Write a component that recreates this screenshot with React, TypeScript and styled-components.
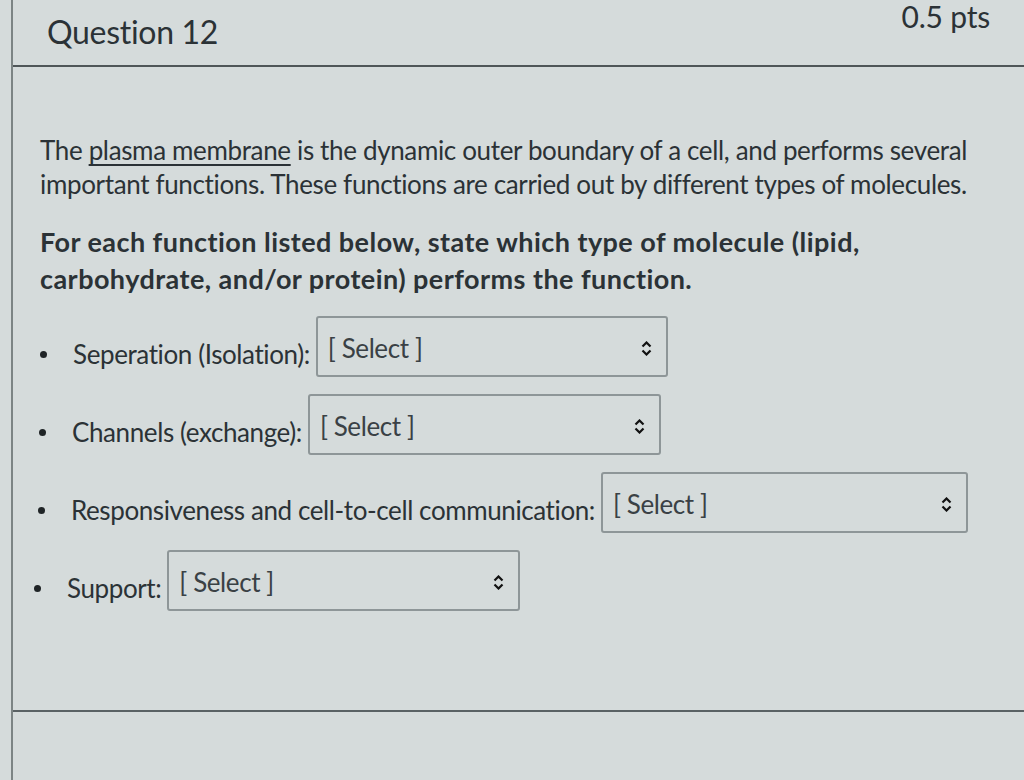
import React from "react";
import styled, { createGlobalStyle } from "styled-components";

const Global = createGlobalStyle`
  html, body { margin: 0; padding: 0; }
  body {
    background: #d5dbdb;
    font-family: Lato, "Noto Sans", sans-serif;
    color: #2b3236;
    width: 1024px;
    height: 780px;
    overflow: hidden;
  }
`;

const Frame = styled.div`
  margin-left: 11px;
  border-left: 2px solid #7c8484;
  height: 780px;
  display: flex;
  flex-direction: column;
`;

const Header = styled.header`
  height: 67px;
  border-bottom: 2px solid #4f5658;
  display: flex;
  justify-content: space-between;
  align-items: flex-start;
  padding: 0 34px;
  box-sizing: border-box;
`;

const Title = styled.h2`
  margin: 13px 0 0 0;
  font-size: 32px;
  line-height: 38px;
  font-weight: 400;
  letter-spacing: -0.3px;
`;

const Points = styled.div`
  margin-top: 0;
  font-size: 30px;
  line-height: 32px;
  font-weight: 400;
  letter-spacing: -0.2px;
`;

const Body = styled.section`
  padding: 66px 0 0 27px;
  height: 645px;
  box-sizing: border-box;
  border-bottom: 2px solid #5a6264;
`;

const Para = styled.p`
  margin: 0;
  font-size: 26px;
  line-height: 34px;
  letter-spacing: -0.35px;
`;

const BoldPara = styled.p`
  margin: 22px 0 0 0;
  font-size: 27px;
  line-height: 37px;
  font-weight: 700;
  letter-spacing: 0.45px;
`;

const Link = styled.span`
  text-decoration: underline;
  text-decoration-thickness: 1.5px;
  text-underline-offset: 4px;
`;

const List = styled.ul`
  margin: 19px 0 0 0;
  padding: 0;
  list-style: none;
  display: flex;
  flex-direction: column;
  gap: 17px;
`;

const Item = styled.li<{ $indent: number }>`
  display: flex;
  align-items: flex-start;
  height: 61px;
  margin-left: ${(p) => p.$indent}px;
  font-size: 26px;
  line-height: 34px;
  letter-spacing: -0.4px;
`;

const Dot = styled.span`
  width: 7px;
  height: 7px;
  border-radius: 50%;
  background: #1f2426;
  margin: 35px 26px 0 0;
  flex: none;
`;

const Label = styled.span`
  margin: 21px 6px 0 0;
  white-space: nowrap;
`;

const SelectBox = styled.div<{ $w: number }>`
  width: ${(p) => p.$w}px;
  height: 61px;
  box-sizing: border-box;
  border: 2px solid #8e9698;
  border-radius: 3px;
  display: flex;
  align-items: flex-start;
  justify-content: space-between;
  padding: 13px 14px 0 10px;
  color: #3a4145;
  flex: none;
`;

const Chevron = styled.svg`
  margin-top: 10px;
`;

const items = [
  { label: "Seperation (Isolation):", w: 352, indent: 0 },
  { label: "Channels (exchange):", w: 353, indent: -1 },
  { label: "Responsiveness and cell-to-cell communication:", w: 367, indent: -2 },
  { label: "Support:", w: 353, indent: -6 },
];

export default function App() {
  return (
    <>
      <Global />
      <Frame>
        <Header>
          <Title>Question 12</Title>
          <Points>0.5 pts</Points>
        </Header>
        <Body>
          <Para>
            The <Link>plasma membrane</Link> is the dynamic outer boundary of a cell, and performs several
            <br />
            important functions. These functions are carried out by different types of molecules.
          </Para>
          <BoldPara>
            For each function listed below, state which type of molecule (lipid,
            <br />
            carbohydrate, and/or protein) performs the function.
          </BoldPara>
          <List>
            {items.map((it) => (
              <Item key={it.label} $indent={it.indent}>
                <Dot />
                <Label>{it.label}</Label>
                <SelectBox $w={it.w}>
                  <span>[ Select ]</span>
                  <Chevron width="11" height="15" viewBox="0 0 11 15" fill="none">
                    <path d="M1.5 5.5 L5.5 1.5 L9.5 5.5 M1.5 9.5 L5.5 13.5 L9.5 9.5" stroke="#111" strokeWidth="2.2" />
                  </Chevron>
                </SelectBox>
              </Item>
            ))}
          </List>
        </Body>
      </Frame>
    </>
  );
}
